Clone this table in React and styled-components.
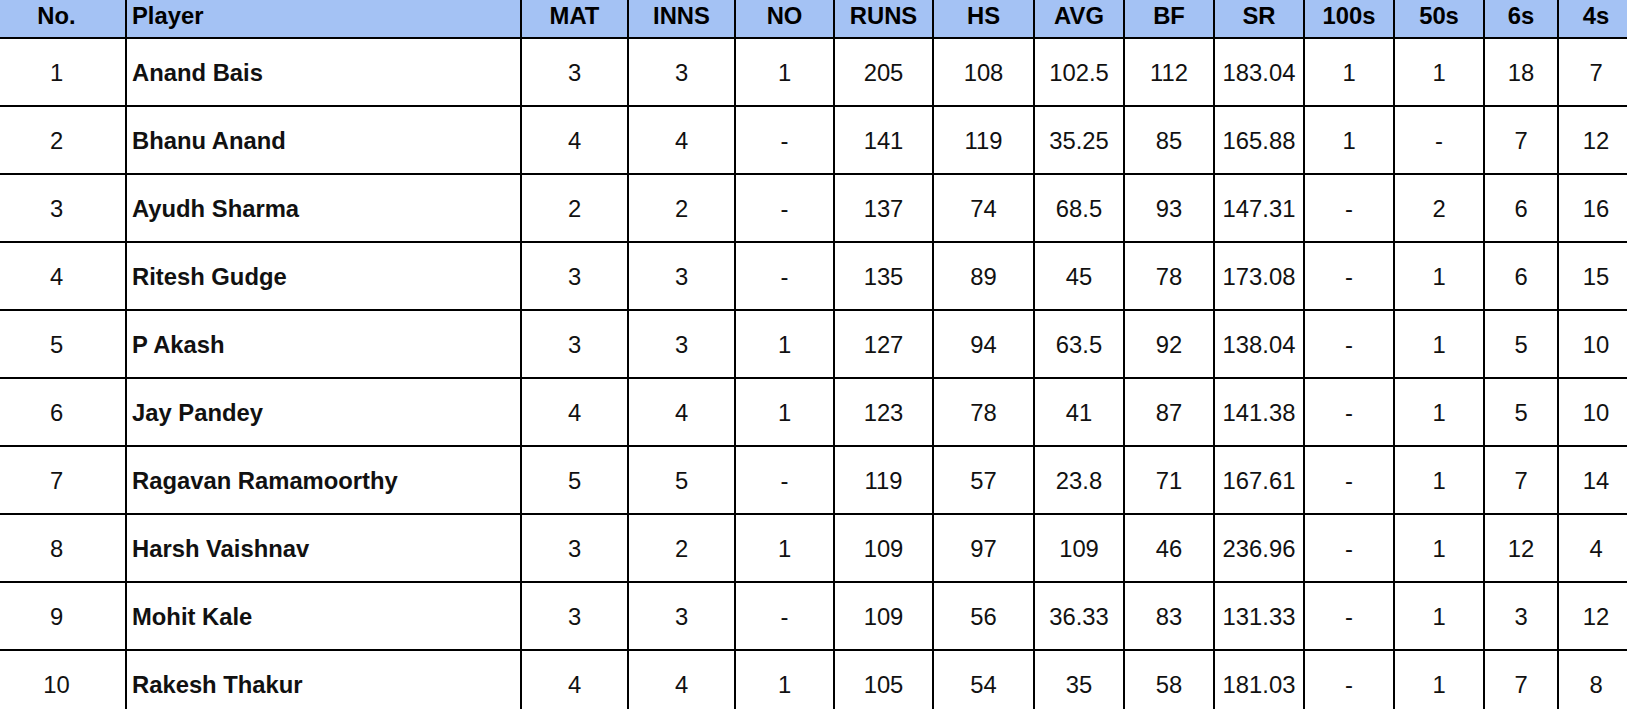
import React from "react";
import styled, { createGlobalStyle } from "styled-components";

const GlobalStyle = createGlobalStyle`
	html, body {
		margin: 0;
		padding: 0;
		background: #ffffff;
		overflow: hidden;
	}
	body {
		font-family: "Liberation Sans", Arial, sans-serif;
	}
`;

const Frame = styled.div`
	width: 1627px;
	height: 709px;
	overflow: hidden;
`;

const Table = styled.div`
	display: grid;
	grid-template-columns: 125px 393px 105px 105px 97px 97px 99px 88px 88px 88px 88px 88px 72px 74px;
	grid-auto-rows: 66px;
	grid-template-rows: 37px;
	gap: 2px;
	background: #000000;
	width: max-content;
`;

const Cell = styled.div`
	display: flex;
	align-items: center;
	justify-content: ${(props) => (props.left ? "flex-start" : "center")};
	padding: ${(props) => (props.left ? "1px 0 0 5px" : props.first ? "1px 12px 0 0" : "1px 0 0 0")};
	background: #ffffff;
	color: #111111;
	font-size: 23.8px;
	line-height: 27px;
	font-weight: ${(props) => (props.bold ? 700 : 400)};
	white-space: nowrap;
`;

const HeadCell = styled(Cell)`
	background: #a4c2f4;
	color: #000000;
	font-weight: 700;
	padding-top: 0;
	padding-bottom: 7px;
`;

const headers = ["No.", "Player", "MAT", "INNS", "NO", "RUNS", "HS", "AVG", "BF", "SR", "100s", "50s", "6s", "4s"];

const rows = [
	["1", "Anand Bais", "3", "3", "1", "205", "108", "102.5", "112", "183.04", "1", "1", "18", "7"],
	["2", "Bhanu Anand", "4", "4", "-", "141", "119", "35.25", "85", "165.88", "1", "-", "7", "12"],
	["3", "Ayudh Sharma", "2", "2", "-", "137", "74", "68.5", "93", "147.31", "-", "2", "6", "16"],
	["4", "Ritesh Gudge", "3", "3", "-", "135", "89", "45", "78", "173.08", "-", "1", "6", "15"],
	["5", "P Akash", "3", "3", "1", "127", "94", "63.5", "92", "138.04", "-", "1", "5", "10"],
	["6", "Jay Pandey", "4", "4", "1", "123", "78", "41", "87", "141.38", "-", "1", "5", "10"],
	["7", "Ragavan Ramamoorthy", "5", "5", "-", "119", "57", "23.8", "71", "167.61", "-", "1", "7", "14"],
	["8", "Harsh Vaishnav", "3", "2", "1", "109", "97", "109", "46", "236.96", "-", "1", "12", "4"],
	["9", "Mohit Kale", "3", "3", "-", "109", "56", "36.33", "83", "131.33", "-", "1", "3", "12"],
	["10", "Rakesh Thakur", "4", "4", "1", "105", "54", "35", "58", "181.03", "-", "1", "7", "8"],
];

export default function App() {
	return (
		<Frame>
			<GlobalStyle />
			<Table>
				{headers.map((h, i) => (
					<HeadCell key={h} left={i === 1} first={i === 0}>
						{h}
					</HeadCell>
				))}
				{rows.map((row) =>
					row.map((value, i) => (
						<Cell key={row[0] + "-" + i} left={i === 1} first={i === 0} bold={i === 1}>
							{value}
						</Cell>
					))
				)}
			</Table>
		</Frame>
	);
}
